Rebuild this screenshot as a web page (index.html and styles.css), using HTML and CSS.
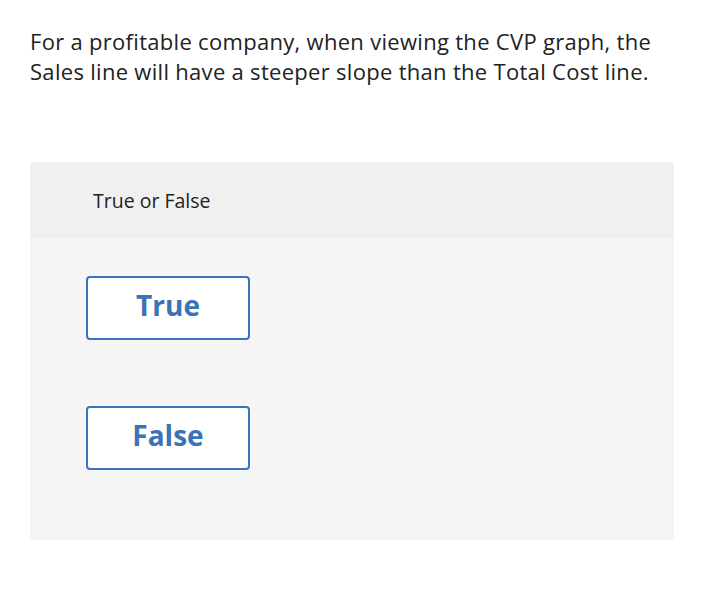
FILE: index.html
```html
<!DOCTYPE html>
<html>
<head>
<meta charset="utf-8">
<link rel="stylesheet" href="styles.css">
</head>
<body>
<div class="page">
  <p class="question">For a profitable company, when viewing the CVP graph, the<br>Sales line will have a steeper slope than the Total Cost line.</p>
  <div class="card">
    <div class="card-head">True or False</div>
    <div class="card-body">
      <button class="choice">True</button>
      <button class="choice">False</button>
    </div>
  </div>
</div>
</body>
</html>
```

FILE: styles.css
```css
html, body {
  margin: 0;
  padding: 0;
  background: #fff;
}
.page {
  padding: 26px 30px 0 30px;
  font-family: "Open Sans", sans-serif;
  color: #222;
}
.question {
  margin: 0;
  font-size: 22px;
  line-height: 30px;
  letter-spacing: 0.3px;
  width: 644px;
  white-space: nowrap;
}
.card {
  margin-top: 76px;
  width: 644px;
  border-radius: 4px;
  overflow: hidden;
  background: #f5f5f5;
}
.card-head {
  background: #f0f0f0;
  height: 76px;
  box-sizing: border-box;
  padding-left: 63px;
  display: flex;
  align-items: center;
  font-size: 19.5px;
  color: #222;
}
.card-body {
  padding: 38px 0 70px 56px;
  display: flex;
  flex-direction: column;
  align-items: flex-start;
  gap: 66px;
}
.choice {
  width: 164px;
  height: 64px;
  box-sizing: border-box;
  border: 2px solid #3a73b6;
  border-radius: 4px;
  background: #fff;
  color: #3a73b6;
  font-family: "Open Sans", sans-serif;
  font-weight: 700;
  font-size: 28px;
  padding: 0 0 6px 0;
  cursor: pointer;
}
```
